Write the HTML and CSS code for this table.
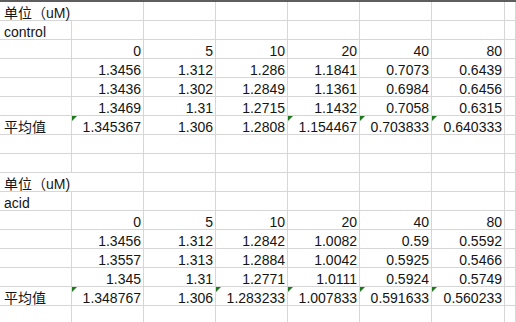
FILE: index.html
```html
<!DOCTYPE html>
<html lang="zh">
<head>
<meta charset="utf-8">
<link rel="stylesheet" href="styles.css">
</head>
<body>
<div class="topbar"></div>
<div class="sheet">
  <div class="c wide">单位（uM)</div><div class="c"></div><div class="c"></div><div class="c"></div><div class="c"></div><div class="c"></div><div class="c"></div>
  <div class="c">control</div><div class="c"></div><div class="c"></div><div class="c"></div><div class="c"></div><div class="c"></div><div class="c"></div><div class="c"></div>
  <div class="c"></div><div class="c n">0</div><div class="c n">5</div><div class="c n">10</div><div class="c n">20</div><div class="c n">40</div><div class="c n">80</div><div class="c"></div>
  <div class="c"></div><div class="c n">1.3456</div><div class="c n">1.312</div><div class="c n">1.286</div><div class="c n">1.1841</div><div class="c n">0.7073</div><div class="c n">0.6439</div><div class="c"></div>
  <div class="c"></div><div class="c n">1.3436</div><div class="c n">1.302</div><div class="c n">1.2849</div><div class="c n">1.1361</div><div class="c n">0.6984</div><div class="c n">0.6456</div><div class="c"></div>
  <div class="c"></div><div class="c n">1.3469</div><div class="c n">1.31</div><div class="c n">1.2715</div><div class="c n">1.1432</div><div class="c n">0.7058</div><div class="c n">0.6315</div><div class="c"></div>
  <div class="c">平均值</div><div class="c n flag">1.345367</div><div class="c n">1.306</div><div class="c n">1.2808</div><div class="c n flag">1.154467</div><div class="c n flag">0.703833</div><div class="c n flag">0.640333</div><div class="c"></div>
  <div class="c"></div><div class="c"></div><div class="c"></div><div class="c"></div><div class="c"></div><div class="c"></div><div class="c"></div><div class="c"></div>
  <div class="c"></div><div class="c"></div><div class="c"></div><div class="c"></div><div class="c"></div><div class="c"></div><div class="c"></div><div class="c"></div>
  <div class="c wide">单位（uM)</div><div class="c"></div><div class="c"></div><div class="c"></div><div class="c"></div><div class="c"></div><div class="c"></div>
  <div class="c">acid</div><div class="c"></div><div class="c"></div><div class="c"></div><div class="c"></div><div class="c"></div><div class="c"></div><div class="c"></div>
  <div class="c"></div><div class="c n">0</div><div class="c n">5</div><div class="c n">10</div><div class="c n">20</div><div class="c n">40</div><div class="c n">80</div><div class="c"></div>
  <div class="c"></div><div class="c n">1.3456</div><div class="c n">1.312</div><div class="c n">1.2842</div><div class="c n">1.0082</div><div class="c n">0.59</div><div class="c n">0.5592</div><div class="c"></div>
  <div class="c"></div><div class="c n">1.3557</div><div class="c n">1.313</div><div class="c n">1.2884</div><div class="c n">1.0042</div><div class="c n">0.5925</div><div class="c n">0.5466</div><div class="c"></div>
  <div class="c"></div><div class="c n">1.345</div><div class="c n">1.31</div><div class="c n">1.2771</div><div class="c n">1.0111</div><div class="c n">0.5924</div><div class="c n">0.5749</div><div class="c"></div>
  <div class="c">平均值</div><div class="c n flag">1.348767</div><div class="c n">1.306</div><div class="c n flag">1.283233</div><div class="c n flag">1.007833</div><div class="c n flag">0.591633</div><div class="c n flag">0.560233</div><div class="c"></div>
  <div class="c"></div><div class="c"></div><div class="c"></div><div class="c"></div><div class="c"></div><div class="c"></div><div class="c"></div><div class="c"></div>
</div>
</body>
</html>
```
FILE: styles.css
```css
html, body {
  margin: 0;
  padding: 0;
  background: #ffffff;
  overflow: hidden;
}
body {
  width: 516px;
  height: 322px;
  font-family: "Liberation Sans", "Noto Sans CJK SC", sans-serif;
  font-size: 14px;
  color: #151515;
}
.topbar {
  height: 2px;
  background: #5e5e5e;
}
.sheet {
  display: grid;
  grid-template-columns: repeat(6, 72px) 73px 1fr;
  grid-auto-rows: 19px;
}
.c {
  position: relative;
  box-sizing: border-box;
  border-right: 1px solid #d6d6d6;
  border-bottom: 1px solid #d6d6d6;
  padding: 3px 2px 0 4px;
  line-height: 16px;
  white-space: nowrap;
  overflow: visible;
}
.wide {
  grid-column: span 2;
}
.n {
  text-align: right;
}
.flag::before {
  content: "";
  position: absolute;
  left: 0;
  top: 0;
  width: 0;
  height: 0;
  border-top: 5px solid #1f7a1f;
  border-right: 5px solid transparent;
}
```
